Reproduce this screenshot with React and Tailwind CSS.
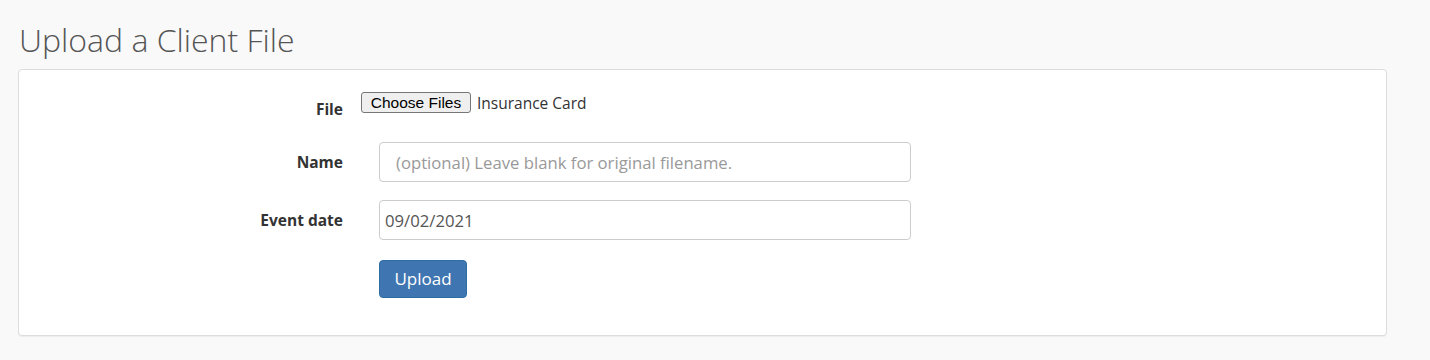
export default function App() {
  return (
    <div className="min-h-[360px] bg-[#f9f9f9] pl-[18px] pr-[43px] pt-[20px] font-['Open_Sans',sans-serif] text-[#333]">
      <h1 className="pl-[1px] text-[32px] font-light leading-[40px] text-[#555]">Upload a Client File</h1>
      <div className="mt-[9px] rounded-[4px] border border-[#ddd] bg-white pb-[37px] pt-[22px] shadow-[0_1px_1px_rgba(0,0,0,0.05)]">
        <div className="flex">
          <label className="w-[324px] pt-[7px] text-right text-[15.5px] font-bold leading-[20px]">File</label>
          <div className="ml-[18px] flex h-[21px] items-center">
            <button className="h-[21px] w-[110px] rounded-[3px] border border-[#767676] bg-[#efefef] font-['Liberation_Sans',sans-serif] text-[15.5px] leading-[18px] text-black">
              Choose Files
            </button>
            <span className="ml-[6px] text-[15.5px] leading-[20px] text-[#333]">Insurance Card</span>
          </div>
        </div>
        <div className="mt-[23px] flex items-center">
          <label className="w-[324px] text-right text-[15.5px] font-bold leading-[20px]">Name</label>
          <input
            type="text"
            placeholder="(optional) Leave blank for original filename."
            className="ml-[36px] h-[40px] w-[532px] rounded-[4px] border border-[#ccc] bg-white px-[16px] text-[16.7px] text-[#555] placeholder:text-[#999] focus:outline-none"
          />
        </div>
        <div className="mt-[18px] flex items-center">
          <label className="w-[324px] text-right text-[15.5px] font-bold leading-[20px]">Event date</label>
          <input
            type="text"
            defaultValue="09/02/2021"
            className="ml-[36px] h-[40px] w-[532px] rounded-[4px] border border-[#ccc] bg-white px-[5px] text-[16.7px] text-[#555] focus:outline-none"
          />
        </div>
        <div className="mt-[20px] flex">
          <div className="w-[324px]" />
          <button className="ml-[36px] h-[38px] w-[88px] rounded-[4px] border border-[#2e6da4] bg-[#3f76b1] text-[17px] leading-[20px] text-white">
            Upload
          </button>
        </div>
      </div>
    </div>
  );
}
